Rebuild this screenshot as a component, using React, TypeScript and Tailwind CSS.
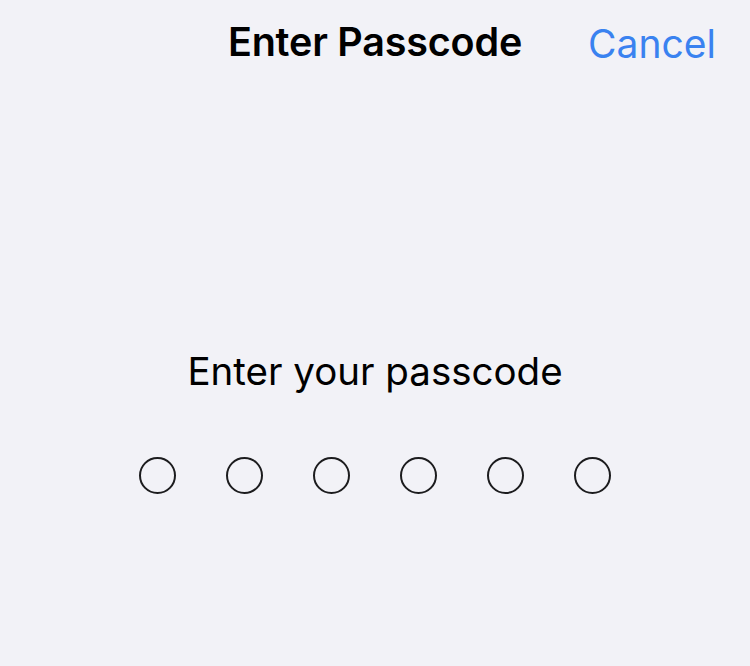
export default function App() {
  const dots = [0, 1, 2, 3, 4, 5];
  return (
    <div
      className="w-[750px] h-[666px] bg-[#f2f2f7] flex flex-col"
      style={{ fontFamily: 'Inter, "Noto Sans", sans-serif' }}
    >
      <div className="relative h-[88px] flex items-center justify-center">
        <div className="text-[39.5px] font-semibold text-black tracking-[-0.2px] leading-none mt-[-2px]">
          Enter Passcode
        </div>
        <div className="absolute right-[34px] top-[24px] text-[39px] text-[#3a82f0] leading-none">
          Cancel
        </div>
      </div>
      <div className="flex flex-col items-center pt-[264px]">
        <div className="text-[38.5px] text-black leading-none">Enter your passcode</div>
        <div className="flex gap-[50px] mt-[66px] ml-[-1px]">
          {dots.map((d) => (
            <div key={d} className="w-[37px] h-[37px] rounded-full border-2 border-[#1c1c1e]" />
          ))}
        </div>
      </div>
    </div>
  );
}
